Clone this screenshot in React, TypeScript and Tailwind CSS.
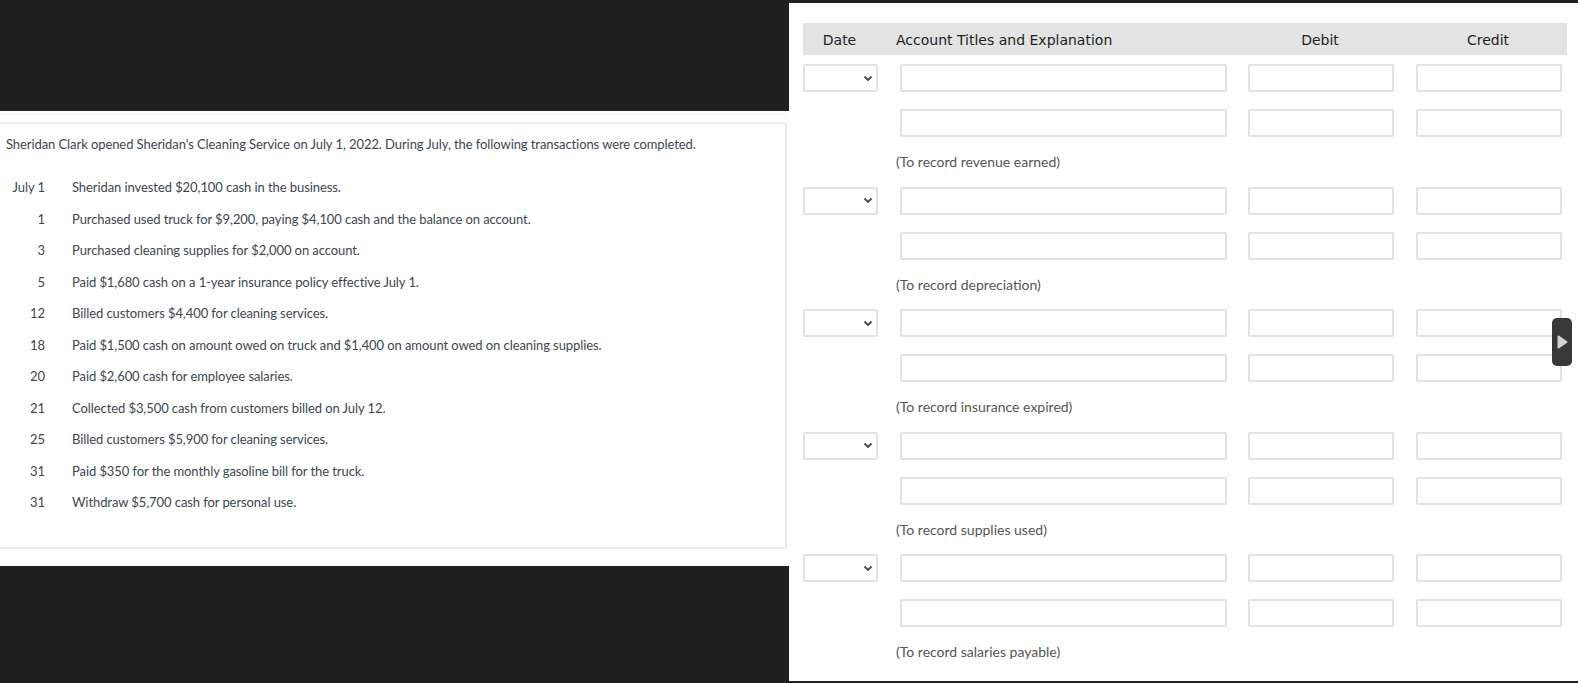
const transactions = [
  { day: "July 1", text: "Sheridan invested $20,100 cash in the business." },
  { day: "1", text: "Purchased used truck for $9,200, paying $4,100 cash and the balance on account." },
  { day: "3", text: "Purchased cleaning supplies for $2,000 on account." },
  { day: "5", text: "Paid $1,680 cash on a 1-year insurance policy effective July 1." },
  { day: "12", text: "Billed customers $4,400 for cleaning services." },
  { day: "18", text: "Paid $1,500 cash on amount owed on truck and $1,400 on amount owed on cleaning supplies." },
  { day: "20", text: "Paid $2,600 cash for employee salaries." },
  { day: "21", text: "Collected $3,500 cash from customers billed on July 12." },
  { day: "25", text: "Billed customers $5,900 for cleaning services." },
  { day: "31", text: "Paid $350 for the monthly gasoline bill for the truck." },
  { day: "31", text: "Withdraw $5,700 cash for personal use." },
];

const entries = [
  "(To record revenue earned)",
  "(To record depreciation)",
  "(To record insurance expired)",
  "(To record supplies used)",
  "(To record salaries payable)",
];

const Box = ({ className }: { className: string }) => (
  <div className={`h-[28px] bg-white border-2 border-[#e2e2e2] rounded-[2px] ${className}`} />
);

const AmountRow = ({ select }: { select?: boolean }) => (
  <div className="flex h-[28px]">
    {select ? (
      <div className="w-[75px] h-[28px] mr-[22px] bg-white border-2 border-[#e2e2e2] rounded-[2px] flex items-center justify-end pr-[3px]">
        <svg width="10" height="7" viewBox="0 0 10 7" fill="none">
          <path d="M1.5 1.5 L5 5 L8.5 1.5" stroke="#444" strokeWidth="1.8" />
        </svg>
      </div>
    ) : (
      <div className="w-[75px] mr-[22px]" />
    )}
    <Box className="w-[327px] mr-[21px]" />
    <Box className="w-[146px] mr-[22px]" />
    <Box className="w-[146px]" />
  </div>
);

export default function App() {
  return (
    <div className="relative w-[1578px] h-[683px] bg-[#1f1f1f] flex overflow-hidden">
      {/* problem text */}
      <div className="w-[789px] flex items-center pb-[6px]">
        <div className="w-full h-[455px] bg-white pt-[3px] pr-[2px] pb-[17px]">
          <div className="h-full border-t border-[#f3f3f3] pt-[7px]">
            <div
              className="h-full border-y-2 border-r-2 border-[#ececec] rounded-r-[3px] pl-[6px] pt-[10px] text-[13px] tracking-[-0.08px] text-[#3d4650]"
              style={{ fontFamily: "Lato, sans-serif" }}
            >
              <p className="h-[20px] leading-[20px]">
                Sheridan Clark opened Sheridan's Cleaning Service on July 1, 2022. During July, the following transactions were completed.
              </p>
              <div className="mt-[23px] flex flex-col gap-[11.5px]">
                {transactions.map((t, i) => (
                  <div key={i} className="flex h-[20px] leading-[20px]">
                    <span className="w-[39px] text-right">{t.day}</span>
                    <span className="ml-[27px]">{t.text}</span>
                  </div>
                ))}
              </div>
            </div>
          </div>
        </div>
      </div>

      {/* journal entry */}
      <div
        className="w-[789px] h-[678px] mt-[3px] bg-white pl-[14px] pt-[20px]"
        style={{ fontFamily: "'DejaVu Sans', sans-serif" }}
      >
        <div className="w-[764px] h-[32px] pt-[2px] bg-[#e3e3e3] flex items-center text-[14px] text-[#222]">
          <span className="w-[73px] text-center">Date</span>
          <span className="ml-[20px] w-[351px]">Account Titles and Explanation</span>
          <span className="w-[146px] text-center">Debit</span>
          <span className="ml-[22px] w-[146px] text-center">Credit</span>
        </div>
        <div className="pt-[9px]">
          {entries.map((note) => (
            <div key={note} className="h-[122.5px]">
              <AmountRow select />
              <div className="h-[17px]" />
              <AmountRow />
              <p
                className="ml-[93px] mt-[15px] text-[14px] leading-[20px] text-[#555]"
                style={{ fontFamily: "Lato, sans-serif" }}
              >
                {note}
              </p>
            </div>
          ))}
        </div>
      </div>

      {/* collapse handle */}
      <div className="absolute left-[1552px] top-[318px] w-[20px] h-[48px] bg-[#383838] rounded-[5px] flex items-center justify-center">
        <svg width="11" height="14" viewBox="0 0 11 14">
          <path d="M1.5 1.5 L9.5 7 L1.5 12.5 Z" fill="#d4d4d4" stroke="#d4d4d4" strokeWidth="2" strokeLinejoin="round" />
        </svg>
      </div>
    </div>
  );
}
